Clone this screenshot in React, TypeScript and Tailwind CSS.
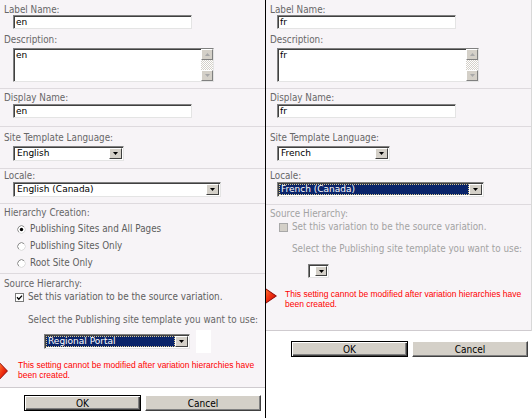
import React from "react";

const sunken =
  "border border-t-[#808080] border-l-[#808080] border-b-[#e4e4e4] border-r-[#e4e4e4] shadow-[inset_1px_1px_0_#404040]";

const valueFont = "font-['DejaVu_Sans',sans-serif] text-[9px]";

function Label({ children, disabled }: { children: React.ReactNode; disabled?: boolean }) {
  return (
    <div className={`h-[11px] leading-[11px] text-[9.8px] whitespace-nowrap ${disabled ? "text-[#a3a3a3]" : "text-[#676767]"}`}>
      {children}
    </div>
  );
}

function TextBox({ value, className }: { value: string; className: string }) {
  return (
    <div className={`${className} h-[14px] bg-white ${sunken} pl-[2px] ${valueFont} leading-[12px] text-black`}>{value}</div>
  );
}

function DropButton({ className = "w-[13px]" }: { className?: string }) {
  return (
    <div className={`${className} h-full shrink-0 bg-[#d4d0c8] border border-t-white border-l-white border-b-[#404040] border-r-[#404040] flex items-center justify-center`}>
      <svg width="5" height="3" viewBox="0 0 5 3">
        <path d="M0 0H5L2.5 3Z" fill="#000" />
      </svg>
    </div>
  );
}

function Select({ value, className, active }: { value: string; className: string; active?: boolean }) {
  return (
    <div className={`${className} h-[15px] bg-white ${sunken} flex items-stretch p-[1px]`}>
      <div
        className={`flex-1 pl-[2px] ${valueFont} leading-[11px] whitespace-nowrap overflow-hidden ${
          active ? "bg-[#0a246a] text-white outline-1 outline-dotted outline-[#d9c98f] -outline-offset-1" : "text-black"
        }`}
      >
        {value}
      </div>
      <DropButton />
    </div>
  );
}

function ScrollButton({ up }: { up?: boolean }) {
  return (
    <div className="h-[11px] bg-[#d4d0c8] border border-t-white border-l-white border-b-[#808080] border-r-[#808080] flex items-center justify-center">
      <svg width="5" height="3" viewBox="0 0 5 3">
        <path d={up ? "M0 3H5L2.5 0Z" : "M0 0H5L2.5 3Z"} fill="#a8a8a8" />
      </svg>
    </div>
  );
}

function TextArea({ value, className }: { value: string; className: string }) {
  return (
    <div className={`${className} h-[34px] bg-white ${sunken} flex`}>
      <div className={`flex-1 pl-[2px] ${valueFont} leading-[12px] text-black`}>{value}</div>
      <div className="w-[12px] flex flex-col">
        <ScrollButton up />
        <div className="flex-1 bg-[repeating-conic-gradient(#d4d0c8_0_25%,#ffffff_0_50%)] bg-[length:2px_2px]" />
        <ScrollButton />
      </div>
    </div>
  );
}

function Radio({ checked }: { checked?: boolean }) {
  return (
    <svg width="9" height="9" viewBox="0 0 9 9">
      <circle cx="4.5" cy="4.5" r="3.8" fill="#fff" />
      <path d="M1.8 7.2A3.8 3.8 0 0 1 7.2 1.8" stroke="#8a8a8a" strokeWidth="1" fill="none" />
      <path d="M7.2 1.8A3.8 3.8 0 0 1 1.8 7.2" stroke="#dcdcdc" strokeWidth="1" fill="none" />
      {checked && <circle cx="4.5" cy="4.5" r="1.7" fill="#000" />}
    </svg>
  );
}

function Checkbox({ checked, disabled }: { checked?: boolean; disabled?: boolean }) {
  return (
    <svg width="9" height="9" viewBox="0 0 9 9">
      <rect x="0.5" y="0.5" width="8" height="8" fill={disabled ? "#d4d0c8" : "#fff"} stroke={disabled ? "#a8a8a8" : "#7a7a7a"} />
      {checked && <path d="M2 4.3L3.8 6.2L7 2.6" stroke="#000" strokeWidth="1.3" fill="none" />}
    </svg>
  );
}

function ErrorArrow({ className }: { className: string }) {
  return (
    <svg className={className} viewBox="0 0 10 20" preserveAspectRatio="none">
      <defs>
        <linearGradient id="arrowFill" x1="0" y1="0" x2="1" y2="1">
          <stop offset="0" stopColor="#ff8a3a" />
          <stop offset="0.5" stopColor="#f03010" />
          <stop offset="1" stopColor="#c00000" />
        </linearGradient>
      </defs>
      <path d="M-2 0.5L9.3 10L-2 19.5Z" fill="url(#arrowFill)" stroke="#8a0000" strokeWidth="1" />
    </svg>
  );
}

function ErrorText() {
  return (
    <div className="font-['Liberation_Sans',Arial,sans-serif] text-[8.5px] leading-[10px] text-[#ff0000]">
      <div className="whitespace-nowrap">This setting cannot be modified after variation hierarchies have</div>
      <div className="whitespace-nowrap">been created.</div>
    </div>
  );
}

function Buttons({ className }: { className: string }) {
  return (
    <div className={`${className} flex gap-[4px] text-[10px] text-black`}>
      <div className="w-[117px] h-[16px] border border-black bg-[#d4d0c8] shadow-[inset_1px_1px_0_#ffffff,inset_-1px_-1px_0_#404040,inset_-2px_-2px_0_#808080] flex items-center justify-center">
        OK
      </div>
      <div className="w-[116px] h-[16px] bg-[#d4d0c8] border border-t-white border-l-white border-b-[#404040] border-r-[#404040] shadow-[inset_-1px_-1px_0_#808080] flex items-center justify-center">
        Cancel
      </div>
    </div>
  );
}

const section = "border-b border-[#dedade] pl-[4px]";

export default function App() {
  return (
    <div className="w-[532px] h-[418px] flex bg-white overflow-hidden font-['DejaVu_Sans_Condensed','DejaVu_Sans',sans-serif]">
      {/* English variation */}
      <div className="w-[265px] flex flex-col">
        <div className="bg-[#f7f4f7]">
          <div className={`${section} h-[89px] pt-[4px]`}>
            <Label>Label Name:</Label>
            <TextBox value="en" className="ml-[9px] w-[179px]" />
            <div className="mt-[5px]">
              <Label>Description:</Label>
            </div>
            <TextArea value="en" className="mt-[3px] ml-[9px] w-[201px]" />
          </div>
          <div className={`${section} h-[38px] pt-[3px]`}>
            <Label>Display Name:</Label>
            <TextBox value="en" className="mt-[1px] ml-[9px] w-[179px]" />
          </div>
          <div className={`${section} h-[42px] pt-[5px]`}>
            <Label>Site Template Language:</Label>
            <Select value="English" className="mt-[3px] ml-[9px] w-[111px]" />
          </div>
          <div className={`${section} h-[35px] pt-[1px]`}>
            <Label>Locale:</Label>
            <Select value="English (Canada)" className="mt-[1px] ml-[9px] w-[208px]" />
          </div>
          <div className={`${section} h-[70px] pt-[3px]`}>
            <Label>Hierarchy Creation:</Label>
            <div className="mt-[3px] pl-[13px] flex flex-col text-[9.8px] text-[#5e5e5e]">
              <div className="h-[17px] flex items-center gap-[4px]">
                <Radio checked />
                <span>Publishing Sites and All Pages</span>
              </div>
              <div className="h-[17px] flex items-center gap-[4px]">
                <Radio />
                <span>Publishing Sites Only</span>
              </div>
              <div className="h-[17px] flex items-center gap-[4px]">
                <Radio />
                <span>Root Site Only</span>
              </div>
            </div>
          </div>
          <div className="h-[114px] pt-[4px] border-b border-[#cfcbcf]">
            <div className="pl-[4px]">
              <Label>Source Hierarchy:</Label>
            </div>
            <div className="mt-[2px] pl-[15px] h-[12px] flex items-center gap-[4px] text-[9.8px] text-[#5e5e5e]">
              <Checkbox checked />
              <span>Set this variation to be the source variation.</span>
            </div>
            <div className="mt-[11px] pl-[28px]">
              <Label>Select the Publishing site template you want to use:</Label>
            </div>
            <div className="mt-[9px] pl-[44px] h-[14px] flex items-center gap-[6px]">
              <Select value="Regional Portal" className="w-[146px]" active />
              <div className="w-[15px] h-[23px] bg-white shrink-0" />
            </div>
            <div className="mt-[12px] flex items-start gap-[10px]">
              <ErrorArrow className="w-[8px] h-[20px] mt-[1px] shrink-0" />
              <ErrorText />
            </div>
          </div>
        </div>
        <Buttons className="mt-[7px] pl-[24px]" />
      </div>

      {/* divider */}
      <div className="w-[1px] bg-black shrink-0" />

      {/* French variation */}
      <div className="flex-1 flex flex-col">
        <div className="bg-[#f7f4f7] border-r border-[#d8d8d8]">
          <div className={`${section} h-[89px] pt-[4px]`}>
            <Label>Label Name:</Label>
            <TextBox value="fr" className="ml-[7px] w-[179px]" />
            <div className="mt-[5px]">
              <Label>Description:</Label>
            </div>
            <TextArea value="fr" className="mt-[3px] ml-[7px] w-[202px]" />
          </div>
          <div className={`${section} h-[38px] pt-[3px]`}>
            <Label>Display Name:</Label>
            <TextBox value="fr" className="mt-[1px] ml-[7px] w-[179px]" />
          </div>
          <div className={`${section} h-[42px] pt-[5px]`}>
            <Label>Site Template Language:</Label>
            <Select value="French" className="mt-[3px] ml-[7px] w-[113px]" />
          </div>
          <div className={`${section} h-[36px] pt-[1px]`}>
            <Label>Locale:</Label>
            <Select value="French (Canada)" className="mt-[1px] ml-[7px] w-[207px]" active />
          </div>
          <div className="h-[126px] pt-[3px] border-b border-[#cfcbcf]">
            <div className="pl-[4px]">
              <Label disabled>Source Hierarchy:</Label>
            </div>
            <div className="mt-[2px] pl-[13px] h-[12px] flex items-center gap-[4px] text-[9.8px] text-[#a3a3a3]">
              <Checkbox disabled />
              <span>Set this variation to be the source variation.</span>
            </div>
            <div className="mt-[10px] pl-[26px]">
              <Label disabled>Select the Publishing site template you want to use:</Label>
            </div>
            <div className="mt-[10px] pl-[42px]">
              <div className={`w-[21px] h-[14px] bg-white ${sunken} flex justify-end p-[1px]`}>
                <DropButton className="w-[12px]" />
              </div>
            </div>
            <div className="mt-[11px] flex items-start gap-[8px]">
              <ErrorArrow className="w-[11px] h-[18px] mt-[-2px] shrink-0" />
              <ErrorText />
            </div>
          </div>
        </div>
        <Buttons className="mt-[10px] pl-[25px]" />
      </div>
    </div>
  );
}
